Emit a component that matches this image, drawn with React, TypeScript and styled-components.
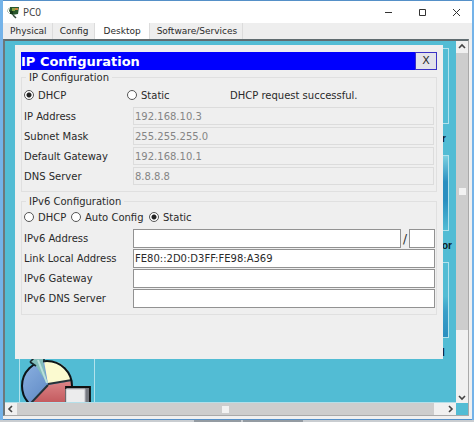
import React, { useState } from 'react';
import styled, { createGlobalStyle } from 'styled-components';

const Global = createGlobalStyle`
  *, *::before, *::after { box-sizing: border-box; }
  html, body { margin: 0; background: #74b3e9; }
  body, button, input { font-family: "DejaVu Sans", Verdana, sans-serif; font-size: 10px; color: #2a2a2a; }
  button, input { margin: 0; padding: 0; border: 0; border-radius: 0; }
`;

const Screen = styled.div`
  display: flex;
  flex-direction: column;
  min-height: 100vh;
  background: #74b3e9;
`;

const AppWindow = styled.main`
  flex: 1;
  display: flex;
  flex-direction: column;
  margin: 0 2px 0 3px;
  background: #f0f0f0;
  border-bottom: 1px solid #5590c8;
`;

const TitleBar = styled.header`
  display: flex;
  align-items: center;
  height: 23px;
  padding: 0 10px 0 4px;
  background: #fff;
  border-top: 1px solid #5590c8;
`;

const WindowName = styled.span`
  flex: 1;
  padding-left: 3px;
  font-family: "Noto Sans", sans-serif;
  font-size: 10px;
  color: #444;
`;

const WindowButtons = styled.div`
  display: flex;
  gap: 22px;
`;

const CaptionButton = styled.button`
  display: grid;
  place-items: center;
  width: 12px;
  height: 12px;
  background: transparent;
`;

const TabBar = styled.nav`
  display: flex;
  height: 16px;
  background: #eee;
`;

const Tab = styled.button<{ $active?: boolean }>`
  height: 16px;
  padding: ${(p) => (p.$active ? '0 8px 0 9px' : '0 5px 0 7px')};
  font-size: 9px;
  line-height: 16px;
  white-space: nowrap;
  background: ${(p) => (p.$active ? '#fff' : '#eee')};
  border-right: 1px solid #dcdcdc;
`;

const Frame = styled.div`
  flex: 1;
  display: grid;
  grid-template-columns: minmax(0, 1fr) 12px;
  grid-template-rows: 1fr 12px;
  margin: 0 3px 3px 0;
  border: 1px solid #a9a9a9;
  border-top: 2px solid #606c70;
  border-left: 2px solid #6d777b;
  background: #52bcd4;
`;

const Desktop = styled.div`
  display: grid;
  grid-template-columns: minmax(0, 1fr);
  overflow: hidden;
  background: #52bcd4;
  border-bottom: 1px solid #b5dfe9;
  & > * { grid-area: 1 / 1; }
`;

const Launchers = styled.div`
  display: flex;
  justify-content: space-between;
  padding: 7px 7px 0 14px;
`;

const LauncherColumn = styled.div<{ $end?: boolean }>`
  display: flex;
  flex-direction: column;
  justify-content: ${(p) => (p.$end ? 'flex-end' : 'flex-start')};
  width: 76px;
`;

const Tile = styled.div<{ $shade?: string }>`
  height: 76px;
  border: 1px solid #b2e2ec;
  background: ${(p) => p.$shade ?? 'transparent'};
`;

const SheetTile = styled.div`
  height: 46px;
  border: 1px solid #b2e2ec;
  border-width: 0 1px;
  overflow: hidden;
  svg { display: block; }
`;

const TileLabel = styled.span`
  height: 31px;
  padding-left: 69px;
  font-family: "Liberation Sans", Arial, sans-serif;
  font-size: 10px;
  font-weight: bold;
  line-height: 30px;
  color: #0c2026;
`;

const Panel = styled.section`
  position: relative;
  display: flex;
  flex-direction: column;
  margin: 4px 13px 43px 10px;
  padding: 7px 6px 44px;
  background: #efefef;
`;

const PanelHeader = styled.div`
  display: flex;
  height: 18px;
  background: #0000fe;
`;

const PanelTitle = styled.h1`
  flex: 1;
  margin: 0;
  font-size: 13px;
  line-height: 19px;
  color: #fff;
`;

const CloseButton = styled.button`
  width: 22px;
  border: 1px solid #3a32c4;
  background: #e3e3ea;
  font-size: 11px;
  line-height: 16px;
`;

const Group = styled.fieldset<{ $last?: boolean }>`
  min-width: 0;
  margin: ${(p) => (p.$last ? '3px 0 0' : '1px 0 0')};
  padding: ${(p) => (p.$last ? '2px 1px 6px 2px' : '4px 2px 6px 2px')};
  border: 1px solid #e0e0e0;
`;

const Legend = styled.legend`
  margin-left: 2px;
  padding: 0 3px;
  line-height: 13px;
`;

const Modes = styled.div<{ $wide?: boolean }>`
  display: grid;
  grid-template-columns: ${(p) => (p.$wide ? '103px 103px 1fr' : '47px 78px 1fr')};
  align-items: center;
  height: 19px;
  padding-bottom: 5px;
`;

const Choice = styled.label`
  display: flex;
  align-items: center;
  gap: 4px;
  white-space: nowrap;
`;

const Radio = styled.input`
  appearance: none;
  flex: none;
  width: 10px;
  height: 10px;
  border: 1px solid #555;
  border-radius: 50%;
  background: #fff;
  &:checked { background: radial-gradient(circle, #222 0 2px, #fff 3px); }
`;

const Rows = styled.div<{ $gap: number }>`
  display: flex;
  flex-direction: column;
  gap: ${(p) => p.$gap}px;
`;

const Row = styled.div`
  display: flex;
  align-items: center;
`;

const RowLabel = styled.label`
  flex: none;
  width: 109px;
`;

const Field = styled.input<{ $short?: boolean }>`
  flex: ${(p) => (p.$short ? '0 0 26px' : '1')};
  min-width: 0;
  height: 19px;
  padding: 0 1px;
  border: 1px solid #929292;
  background: #fff;
  &:disabled {
    height: 18px;
    border-color: #dcdcdc;
    background: #efefef;
    color: #858585;
  }
`;

const Slash = styled.span`
  width: 8px;
  text-align: center;
  font-size: 12px;
`;

const ScrollBar = styled.div<{ $vertical?: boolean }>`
  display: flex;
  flex-direction: ${(p) => (p.$vertical ? 'column' : 'row')};
  background: #f0f0f0;
`;

const ScrollButton = styled.button`
  display: grid;
  place-items: center;
  flex: 0 0 12px;
  min-height: 12px;
  background: #f0f0f0;
`;

const Thumb = styled.div`
  flex: 1;
  display: grid;
  place-items: center;
  background: #cdcdcd;
  &::after { content: ''; width: 7px; height: 7px; background: #f2f2f2; }
`;

const Spare = styled.div<{ $size: number }>`
  flex: 0 0 ${(p) => p.$size}px;
`;

const Taskbar = styled.footer`
  display: flex;
  height: 3px;
  background: #c9cdd1;
`;

const TaskItem = styled.div<{ $from: number; $to: number }>`
  margin-left: ${(p) => p.$from}%;
  width: ${(p) => p.$to - p.$from}%;
  background: linear-gradient(90deg, #949ba2 0 43%, #c9cdd1 43% 45%, #949ba2 45%);
`;

const Chevron = ({ d }: { d: string }) => (
  <svg width="8" height="8" viewBox="0 0 8 8" fill="none" stroke="#444" strokeWidth="1.6">
    <path d={d} />
  </svg>
);

const AppLogo = () => (
  <svg width="13" height="13" viewBox="0 0 13 13">
    <path d="M3 1 12 1 11 8 5 9 2 5Z" fill="#28562b" />
    <path d="M5 2h3v3H5z" fill="#86a344" />
    <path d="M8 2h3v2H8z" fill="#c8843d" />
    <path d="M2 2 0 5l3 3" fill="none" stroke="#b9c2b9" />
    <path d="M3 5h3v3H3z" fill="#173819" />
    <path d="m6 9 3 3" stroke="#34483a" strokeWidth="1.5" />
  </svg>
);

const PieSheet = () => (
  <svg width="74" height="46" viewBox="0 0 74 46">
    <defs>
      <linearGradient id="blue" x1="0" y1="0" x2="1" y2="1">
        <stop offset="0" stopColor="#8db3e2" /><stop offset="1" stopColor="#4773b5" />
      </linearGradient>
      <linearGradient id="red" x1="0" y1="0" x2="0" y2="1">
        <stop offset="0" stopColor="#dc8587" /><stop offset="1" stopColor="#bd4f54" />
      </linearGradient>
    </defs>
    <circle cx="27" cy="30" r="25" fill="url(#blue)" />
    <path d="M28 28 24 5C39 3 50 12 52 25Z" fill="#fbfad0" />
    <path d="M28 29 52 25C54 35 48 46 44 52H8Z" fill="url(#red)" />
    <path d="m28 29-17 18M28 28l24-4" stroke="#263238" strokeWidth="2" />
    <circle cx="27" cy="30" r="25" fill="none" stroke="#0b1418" strokeWidth="2" />
    <path d="M10 5 15 1h9l-1 5 4 21-11-17Z" fill="#82bdba" />
    <path d="M10 6 15 1h9v5M10 6l6 4" fill="none" stroke="#17282c" strokeWidth="1.6" />
    <path d="m18 4 9 23" stroke="#b9dfda" strokeWidth="2" />
    <path d="M46 31h24v16H46Z" fill="#777980" stroke="#111" strokeWidth="1.8" />
    <path d="M46 33h19v14H46Z" fill="#ececed" stroke="#bcbcc2" />
  </svg>
);

const tabs = ['Physical', 'Config', 'Desktop', 'Software/Services'];

const ipRows = [
  ['IP Address', '192.168.10.3'],
  ['Subnet Mask', '255.255.255.0'],
  ['Default Gateway', '192.168.10.1'],
  ['DNS Server', '8.8.8.8'],
];

const ipv6Rows = [
  ['IPv6 Address', ''],
  ['Link Local Address', 'FE80::2D0:D3FF:FE98:A369'],
  ['IPv6 Gateway', ''],
  ['IPv6 DNS Server', ''],
];

export default function App() {
  const [tab, setTab] = useState('Desktop');
  return (
    <Screen>
      <Global />
      <AppWindow>
        <TitleBar>
          <AppLogo />
          <WindowName>PC0</WindowName>
          <WindowButtons>
            <CaptionButton aria-label="Minimize">
              <svg width="9" height="9"><path d="M1 4.5h7" stroke="#333" /></svg>
            </CaptionButton>
            <CaptionButton aria-label="Maximize">
              <svg width="9" height="9"><path d="M1.5 1.5h6v6h-6z" fill="none" stroke="#333" /></svg>
            </CaptionButton>
            <CaptionButton aria-label="Close">
              <svg width="9" height="9"><path d="m1 1 7 7m0-7-7 7" stroke="#333" /></svg>
            </CaptionButton>
          </WindowButtons>
        </TitleBar>
        <TabBar>
          {tabs.map((t) => (
            <Tab key={t} $active={t === tab} onClick={() => setTab(t)}>{t}</Tab>
          ))}
        </TabBar>
        <Frame>
          <Desktop>
            <Launchers>
              <LauncherColumn $end>
                <SheetTile><PieSheet /></SheetTile>
              </LauncherColumn>
              <LauncherColumn>
                <Tile />
                <TileLabel>r</TileLabel>
                <Tile $shade="linear-gradient(#7bd0e0, #2a8fc0 35%, #2a8fc0 60%, #52bcd4)" />
                <TileLabel>or</TileLabel>
                <Tile $shade="linear-gradient(#52bcd4 45%, #3a9fc8 65%, #2a8fc0)" />
                <TileLabel>l</TileLabel>
              </LauncherColumn>
            </Launchers>
            <Panel>
              <PanelHeader>
                <PanelTitle>IP Configuration</PanelTitle>
                <CloseButton aria-label="Close IP Configuration">X</CloseButton>
              </PanelHeader>
              <Group>
                <Legend>IP Configuration</Legend>
                <Modes $wide>
                  <Choice><Radio type="radio" name="ipv4" defaultChecked />DHCP</Choice>
                  <Choice><Radio type="radio" name="ipv4" />Static</Choice>
                  <span>DHCP request successful.</span>
                </Modes>
                <Rows $gap={2}>
                  {ipRows.map(([label, value], i) => (
                    <Row key={label}>
                      <RowLabel htmlFor={`ip-${i}`}>{label}</RowLabel>
                      <Field id={`ip-${i}`} defaultValue={value} disabled />
                    </Row>
                  ))}
                </Rows>
              </Group>
              <Group $last>
                <Legend>IPv6 Configuration</Legend>
                <Modes>
                  <Choice><Radio type="radio" name="ipv6" />DHCP</Choice>
                  <Choice><Radio type="radio" name="ipv6" />Auto Config</Choice>
                  <Choice><Radio type="radio" name="ipv6" defaultChecked />Static</Choice>
                </Modes>
                <Rows $gap={1}>
                  {ipv6Rows.map(([label, value], i) => (
                    <Row key={label}>
                      <RowLabel htmlFor={`ipv6-${i}`}>{label}</RowLabel>
                      <Field id={`ipv6-${i}`} defaultValue={value} />
                      {i === 0 && (
                        <>
                          <Slash>/</Slash>
                          <Field $short aria-label="IPv6 prefix length" />
                        </>
                      )}
                    </Row>
                  ))}
                </Rows>
              </Group>
            </Panel>
          </Desktop>
          <ScrollBar $vertical>
            <ScrollButton aria-label="Scroll up"><Chevron d="m1 5 3-3 3 3" /></ScrollButton>
            <Thumb />
            <Spare $size={61} />
            <ScrollButton aria-label="Scroll down"><Chevron d="m1 3 3 3 3-3" /></ScrollButton>
          </ScrollBar>
          <ScrollBar>
            <ScrollButton aria-label="Scroll left"><Chevron d="m5 1-3 3 3 3" /></ScrollButton>
            <Thumb />
            <Spare $size={10} />
            <ScrollButton aria-label="Scroll right"><Chevron d="m3 1 3 3-3 3" /></ScrollButton>
          </ScrollBar>
        </Frame>
      </AppWindow>
      <Taskbar><TaskItem $from={41} $to={64} /></Taskbar>
    </Screen>
  );
}
